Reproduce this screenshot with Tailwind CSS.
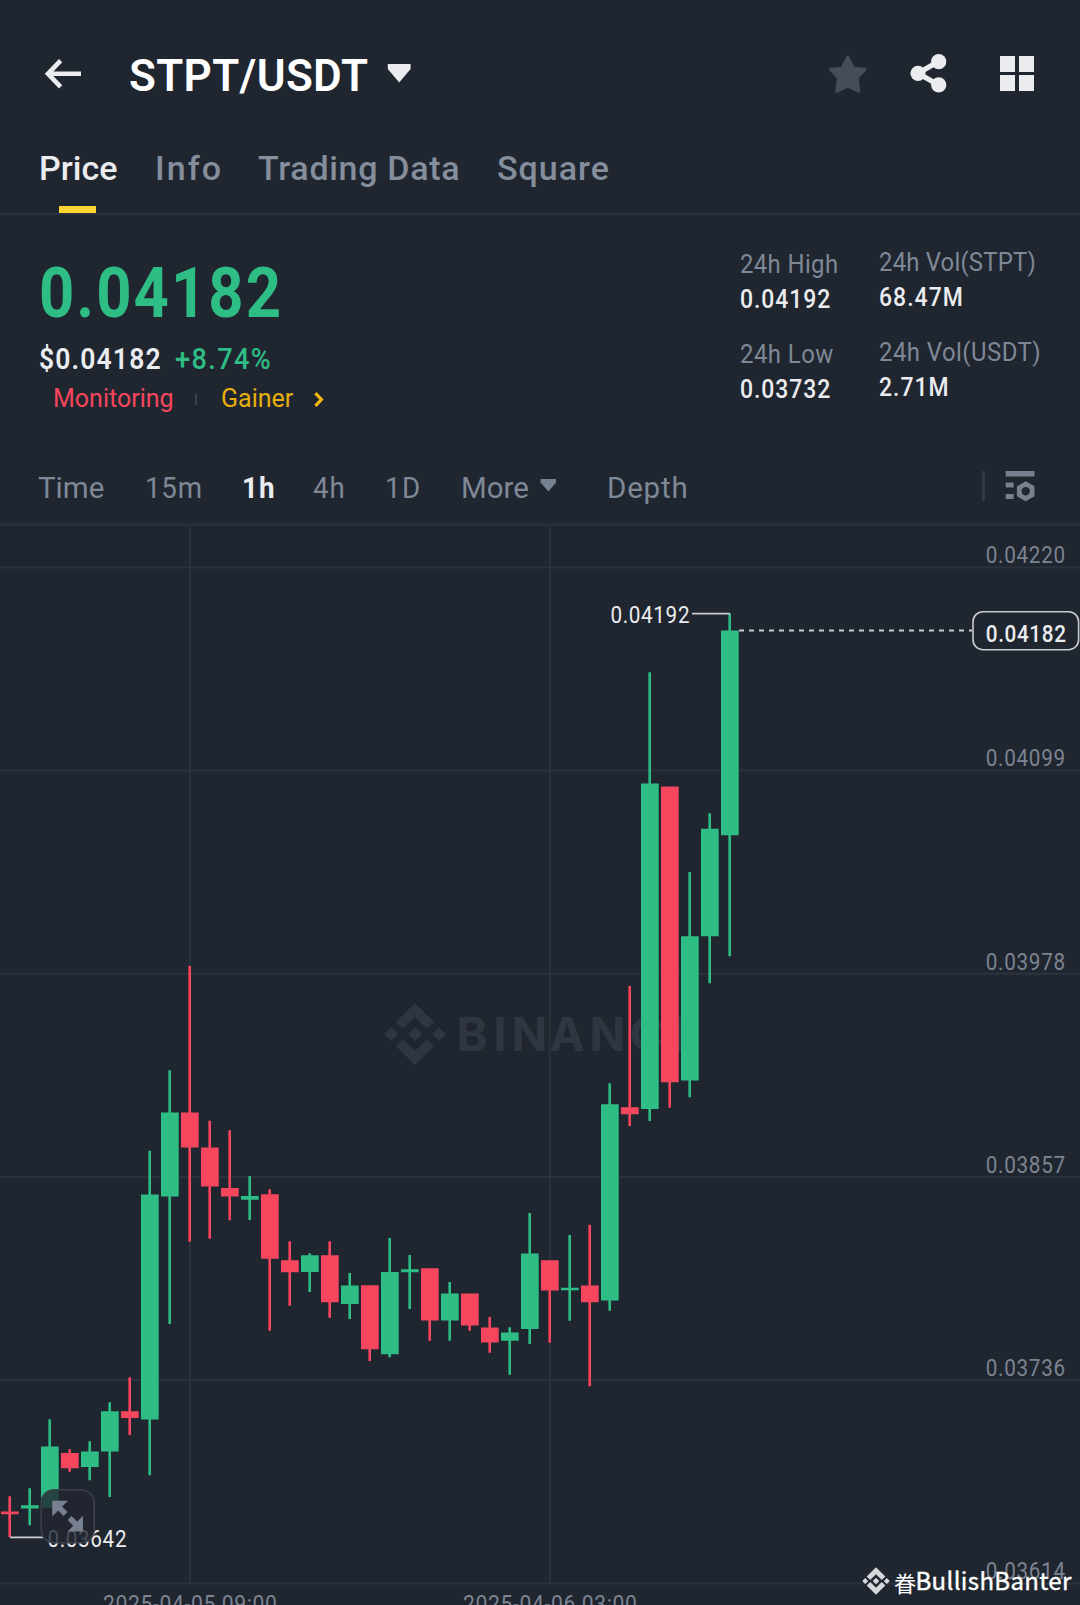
<!DOCTYPE html>
<html lang="en">
<head>
<meta charset="utf-8">
<title>STPT/USDT</title>
<script src="https://cdn.jsdelivr.net/npm/@tailwindcss/browser@4"></script>
</head>
<body class="bg-[#202630] text-[#eaecef] font-[Roboto,'Liberation_Sans',sans-serif] overflow-hidden">
<div class="w-[1080px] h-[1605px] flex flex-col overflow-hidden whitespace-nowrap">

  <!-- Title bar -->
  <header class="h-[60px] mt-[45px] shrink-0 flex items-start">
    <svg class="ml-[44px] mt-[14px] w-[38px] h-[30px] shrink-0" viewBox="0 0 38 30" fill="none" stroke="#eaecef" stroke-width="4.6"><path d="M37 14.8H4M16.6 1.7L4 14.8L16.6 27.9"/></svg>
    <h1 class="ml-[47px] mt-px w-[239px] text-[44px] leading-[60px] font-semibold tracking-[0.35px] text-white">STPT/USDT</h1>
    <svg class="ml-[19px] mt-[19px] w-[24px] h-[19px] shrink-0" viewBox="0 0 24 19" fill="#eaecef"><path d="M.8 0H23.6V5L12.2 18.4L.8 5Z"/></svg>
    <svg class="ml-[417px] mt-[9px] w-[40px] h-[41px] shrink-0" viewBox="0 0 40 41" fill="#474d57" stroke="#474d57" stroke-width="3" stroke-linejoin="round"><path d="M19.8 3.2L25.3 14.2L37 15.2L29.2 23.8L30.8 37.3L19.8 31.9L8.8 37.3L10.4 23.8L2.6 15.2L14.3 14.2Z"/></svg>
    <svg class="ml-[42px] mt-[9px] w-[38px] h-[39px] shrink-0" viewBox="0 0 38 39" fill="#eaecef"><path d="M8 19.3L28.5 7.5M8 19.3L28.5 31" stroke="#eaecef" stroke-width="5.2"/><circle cx="8" cy="19.3" r="7.6"/><circle cx="28.7" cy="7.7" r="7.6"/><circle cx="28.7" cy="30.9" r="7.6"/></svg>
    <div class="ml-[52px] mt-[11px] grid grid-cols-[15px_15px] grid-rows-[16px_16px] gap-x-1 gap-y-[3px]">
      <i class="bg-[#eaecef]"></i><i class="bg-[#eaecef]"></i><i class="bg-[#eaecef]"></i><i class="bg-[#eaecef]"></i>
    </div>
  </header>

  <!-- Section tabs -->
  <nav class="h-[110px] shrink-0 border-b-2 border-[#2b313b] pl-[39px] pt-[43px] grid grid-cols-[116px_103px_239px_1fr] text-[34px] leading-[40px] font-medium text-[#848e9c]">
    <div class="flex flex-col text-[#eaecef]">Price<span class="ml-5 mt-[18px] w-[37px] h-[7px] bg-[#fcd535]"></span></div>
    <div class="tracking-[2.1px]">Info</div>
    <div class="tracking-[0.7px]">Trading Data</div>
    <div class="tracking-[1px]">Square</div>
  </nav>

  <!-- Price summary -->
  <section class="h-[253px] shrink-0 flex">
    <div class="w-[740px] pl-[39px] pt-[43px]">
      <div class="text-[70px] leading-[70px] font-bold origin-left scale-x-[0.88] tracking-[2.3px] text-[#2ebd85]">0.04182</div>
      <div class="mt-[13px] flex text-[29.5px] leading-[36px]">
        <span class="w-[136px] origin-left scale-x-[0.9] tracking-[1.25px] font-semibold">$0.04182</span>
        <span class="origin-left scale-x-[0.92] tracking-[1.5px] font-medium text-[#2ebd85]">+8.74%</span>
      </div>
      <div class="mt-[6px] pl-[14px] flex items-center text-[25px] leading-[32px]">
        <span class="w-[142px] text-[#f6465d]">Monitoring</span>
        <span class="w-[2px] h-[11px] bg-[#3a414d]"></span>
        <span class="ml-[24px] w-[93px] text-[#e6af0c]">Gainer</span>
        <svg class="w-[10px] h-[15px]" viewBox="0 0 10 15" fill="none" stroke="#f0b90b" stroke-width="3.2"><path d="M1.4 1.2L7.4 7.5L1.4 13.8"/></svg>
      </div>
    </div>
    <dl class="w-[139px] pt-[32px] text-[25.5px] leading-[35px]">
      <dt class="text-[26px] origin-left scale-x-[0.92] tracking-[0.4px] text-[#7f8896]">24h High</dt><dd class="origin-left scale-x-[0.9] tracking-[1.06px] font-medium">0.04192</dd>
      <dt class="mt-5 text-[26px] origin-left scale-x-[0.92] tracking-[0.5px] text-[#7f8896]">24h Low</dt><dd class="origin-left scale-x-[0.9] tracking-[1.06px] font-medium">0.03732</dd>
    </dl>
    <dl class="pt-[30px] text-[25.5px] leading-[35px]">
      <dt class="text-[26px] origin-left scale-x-[0.92] tracking-[0.2px] text-[#7f8896]">24h Vol(STPT)</dt><dd class="origin-left scale-x-[0.9] tracking-[1.15px] font-medium">68.47M</dd>
      <dt class="mt-5 text-[26px] origin-left scale-x-[0.92] tracking-[0.5px] text-[#7f8896]">24h Vol(USDT)</dt><dd class="origin-left scale-x-[0.9] tracking-[1.1px] font-medium">2.71M</dd>
    </dl>
  </section>

  <!-- Interval picker -->
  <nav class="h-[58px] shrink-0 border-b-[3px] border-[#282e38] pl-[38px] grid grid-cols-[107px_97px_71px_72px_76px_78px_68px_375px_23px_1fr] text-[29.5px] leading-[40px] text-[#7f8896]">
    <span>Time</span>
    <span class="origin-left scale-x-[0.94] tracking-[0.8px]">15m</span>
    <span class="origin-left scale-x-[0.94] tracking-[1.2px] font-bold text-[#eaecef]">1h</span>
    <span class="origin-left scale-x-[0.94] tracking-[1.1px]">4h</span>
    <span class="origin-left scale-x-[0.94] tracking-[1.4px]">1D</span>
    <span>More</span>
    <svg class="mt-[11px] w-[18px] h-[13px]" viewBox="0 0 18 13" fill="#76808f"><path d="M2 0H17V3.5L9.5 12.4L1.5 3.5V0Z"/></svg>
    <span class="tracking-[0.8px]">Depth</span>
    <i class="mt-[3px] w-[3px] h-[30px] bg-[#333a45]"></i>
    <svg class="mt-[3px] w-[30px] h-[31px]" viewBox="0 0 30 31" fill="#76808f"><path d="M.7 0H29.5V5.4H.7ZM.7 11.5H8.7V16.6H.7ZM.7 23H8.7V28H.7Z"/><path fill-rule="evenodd" d="M20.7 10.2L29.5 15.2V25.2L20.7 30.3L11.9 25.2V15.2ZM20.7 16A4.2 4.2 0 1 0 20.7 24.4A4.2 4.2 0 1 0 20.7 16Z"/></svg>
  </nav>

  <!-- Candlestick chart -->
  <svg class="w-[1080px] h-[1079px] shrink-0 block" viewBox="0 526 1080 1079">
    <g stroke="#2c323d" stroke-width="2">
      <path d="M0 567.6H1080M0 770.6H1080M0 973.8H1080M0 1177H1080M0 1380H1080M0 1583.4H1080M189.8 526V1583M549.8 526V1583"/>
    </g>
    <g fill="#303641">
      <path d="M415 1003L434 1022L427 1029L415 1017L403 1029L396 1022ZM415 1065L434 1046L427 1039L415 1051L403 1039L396 1046ZM391 1027L398 1034L391 1041L384 1034ZM439 1027L446 1034L439 1041L432 1034ZM415 1027L422 1034L415 1041L408 1034Z"/>
      <text y="1051.4" x="456.5 493.5 511.5 549.5 589.5 629.5 671" class="font-[Inter] font-bold text-[47px]">BINANCE</text>
    </g>
    <g id="candles"></g>
    <g fill="none" stroke="#c8cbd1" stroke-width="1.8">
      <path d="M692 613.6H730M10 1537.3H43"/>
      <path d="M739 630.5H972" stroke-width="1.8" stroke-dasharray="5 5"/>
      <rect x="973" y="611.7" width="105.6" height="38" rx="10" stroke-width="1.6"/>
    </g>
    <g class="text-[23px]" fill="#7b8391">
      <g class="tracking-[0.75px]">
        <text x="985.8" y="563.2" class="[transform-box:fill-box] origin-left scale-x-[0.9]">0.04220</text>
        <text x="985.8" y="766" class="[transform-box:fill-box] origin-left scale-x-[0.9]">0.04099</text>
        <text x="985.8" y="969.6" class="[transform-box:fill-box] origin-left scale-x-[0.9]">0.03978</text>
        <text x="985.8" y="1172.6" class="[transform-box:fill-box] origin-left scale-x-[0.9]">0.03857</text>
        <text x="985.8" y="1375.6" class="[transform-box:fill-box] origin-left scale-x-[0.9]">0.03736</text>
        <text x="985.8" y="1578.6" class="[transform-box:fill-box] origin-left scale-x-[0.9]">0.03614</text>
      </g>
      <g class="tracking-[0.67px]">
        <text x="103" y="1612" class="[transform-box:fill-box] origin-left scale-x-[0.92]">2025-04-05 09:00</text>
        <text x="463" y="1612" class="[transform-box:fill-box] origin-left scale-x-[0.92]">2025-04-06 03:00</text>
      </g>
      <g fill="#eaecef" class="tracking-[0.7px]">
        <text x="610.5" y="623" class="[transform-box:fill-box] origin-left scale-x-[0.9]">0.04192</text>
        <text x="985.8" y="642" class="[transform-box:fill-box] origin-left scale-x-[0.9] font-medium">0.04182</text>
        <text x="47.5" y="1547" class="[transform-box:fill-box] origin-left scale-x-[0.9]">0.03642</text>
      </g>
    </g>
    <!-- Full screen button -->
    <rect x="41.2" y="1489.7" width="53" height="53" rx="13" fill="#202630" fill-opacity=".8" stroke="#3a404b" stroke-width="1.6"/>
    <path fill="#76808f" d="M52.2 1500.8H68L52.2 1516.4ZM83 1531.4H67.6L83 1515.8Z"/>
    <path stroke="#76808f" stroke-width="5.6" d="M57 1505.5L65.6 1514M69.6 1518L78 1526.5"/>
    <!-- Author mark -->
    <path fill="#d5d7db" d="M876 1567.3L885.3 1576.6L881.8 1580.1L876 1574.3L870.2 1580.1L866.7 1576.6ZM876 1594.8L885.3 1585.5L881.8 1582L876 1587.8L870.2 1582L866.7 1585.5ZM865.2 1578L868.2 1581L865.2 1584L862.2 1581ZM886.8 1578L889.8 1581L886.8 1584L883.8 1581ZM876 1577.7L879.3 1581L876 1584.3L872.7 1581Z"/>
    <g fill="#fff" class="font-['Noto_Sans_CJK_SC',sans-serif]">
      <text x="894" y="1592" class="text-[22px]">眷</text>
      <text x="915.5" y="1590" class="text-[24px] tracking-[0.35px]" stroke="#fff" stroke-width=".4">BullishBanter</text>
    </g>
  </svg>
</div>
<script>
// [up?, wick top, wick bottom, body top, body bottom], one candle per 20px
const candles = [
[0,1496.3,1537,1511.5,1514.3],[1,1488.3,1525.3,1505.2,1508.5],[1,1419.3,1508,1446.5,1508],[0,1449.3,1471.7,1453,1468.3],
[1,1441.3,1480.3,1451.4,1467],[1,1402.3,1497,1411.2,1451.6],[0,1377.3,1435,1411.2,1418],[1,1150.7,1475.3,1194.5,1419.6],
[1,1070.3,1324,1112.4,1196.6],[0,966,1241.7,1112.4,1147.6],[0,1120.7,1238.7,1147.4,1186.6],[0,1130.3,1220.3,1188,1196.6],
[1,1176,1220,1196,1199.7],[0,1189.3,1330.7,1194.3,1258.7],[0,1241.3,1305.7,1260.3,1272.2],[1,1253.3,1292,1255.2,1272],
[0,1241.3,1317.7,1255.2,1302.2],[1,1273,1319,1285.4,1304],[0,1285.3,1361,1285.3,1349.3],[1,1238,1357.3,1272,1354.2],
[1,1255,1309,1269.2,1272.2],[0,1268.3,1340.7,1268.3,1320.6],[1,1282,1340.7,1293.6,1320.6],[0,1293.4,1330.7,1293.4,1325.6],
[0,1317,1352.7,1327.5,1342.6],[1,1327.3,1374.7,1332.5,1340.7],[1,1213,1344,1253.4,1329],[0,1260.3,1342.7,1260.3,1290.6],
[1,1235,1320.7,1287.7,1290.3],[0,1224.7,1386.3,1285.4,1302.3],[1,1083.3,1310.7,1104.2,1300.6],[0,986,1126,1107.2,1114.2],
[1,672.3,1121,783.5,1109],[0,786.5,1107.7,786.5,1082.3],[1,872,1097.3,936.2,1080.4],[1,813.3,983.3,828.8,936.3],[1,613.3,956.3,630.4,835.3]];
document.getElementById('candles').innerHTML = candles.map(([up, wt, wb, bt, bb], i) => {
  const x = 20 * i;
  return `<path fill="${up ? '#2ebd85' : '#f6465d'}" d="M${x + 8.4} ${wt}h2.6V${wb}h-2.6ZM${x + 1} ${bt}h17.7V${bb}h-17.7Z"/>`;
}).join('');
</script>
</body>
</html>
